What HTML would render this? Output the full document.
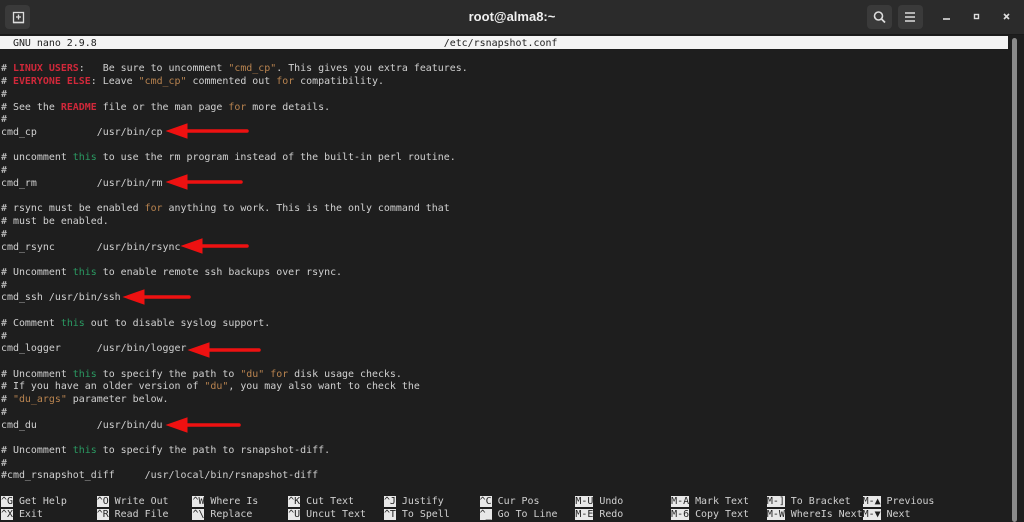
<!DOCTYPE html>
<html><head><meta charset="utf-8"><style>
*{margin:0;padding:0;box-sizing:border-box}
html,body{width:1024px;height:522px;overflow:hidden}
body{background:#1e1e1e;position:relative;font-family:"DejaVu Sans Mono","Liberation Mono",monospace;}
#tb{position:absolute;left:0;top:0;width:1024px;height:35px;background:#2b2b2b;border-bottom:1px solid #1a1a1a}
#tb .t{position:absolute;left:0;right:0;top:9px;text-align:center;color:#f0f0f0;font:bold 13px "Liberation Sans",sans-serif}
.btn{position:absolute;top:5px;width:25px;height:24px;background:#3a3a3a;border-radius:4px}
#term{position:absolute;left:1px;top:38px;font-size:9.95px;line-height:12.72px;color:#d0d0d0;white-space:pre}
.r{color:#d0283a;font-weight:bold}.o{color:#b8834f}.g{color:#2a9a62}
.k{background:#e8e8e8;color:#1e1e1e}
#hdr{position:absolute;left:0;top:36px;width:1008px;height:13px;background:#f4f4f4}
#sb{position:absolute;left:1012px;top:38px;width:5px;height:484px;background:#8a8a8a;border-radius:3px}
svg{position:absolute;left:0;top:0}
</style></head><body>
<div id="tb">
<div class="btn" style="left:5px"></div>
<svg width="40" height="35"><rect x="13.5" y="12.5" width="10" height="10" fill="none" stroke="#ddd" stroke-width="1.3"/><path d="M18.5 14.5v5M16 17h5" stroke="#ddd" stroke-width="1.3"/><path d="M13 22.5h11" stroke="#ddd" stroke-width="1.5"/></svg>
<div class="t">root@alma8:~</div>
<div class="btn" style="left:867px"></div>
<div class="btn" style="left:898px"></div>
<svg width="1024" height="35"><circle cx="878.5" cy="16" r="4" fill="none" stroke="#ddd" stroke-width="1.6"/><path d="M881.5 19l3.5 3.5" stroke="#ddd" stroke-width="1.8"/><path d="M905 13h10M905 17h10M905 21h10" stroke="#ddd" stroke-width="1.4"/><path d="M943 19h7" stroke="#ddd" stroke-width="1.6"/><rect x="974.5" y="14.5" width="4" height="4" fill="none" stroke="#ddd" stroke-width="1.4"/><path d="M1004 14l5 5M1009 14l-5 5" stroke="#ddd" stroke-width="1.6"/></svg>
</div>
<div id="hdr"></div>
<div id="sb"></div>
<div id="term"><span style="color:#222">  GNU nano 2.9.8                                                          /etc/rsnapshot.conf</span>

# <span class="r">LINUX USERS</span>:   Be sure to uncomment <span class="o">"cmd_cp"</span>. This gives you extra features.
# <span class="r">EVERYONE ELSE</span>: Leave <span class="o">"cmd_cp"</span> commented out <span class="o">for</span> compatibility.
#
# See the <span class="r">README</span> file or the man page <span class="o">for</span> more details.
#
cmd_cp          /usr/bin/cp

# uncomment <span class="g">this</span> to use the rm program instead of the built-in perl routine.
#
cmd_rm          /usr/bin/rm

# rsync must be enabled <span class="o">for</span> anything to work. This is the only command that
# must be enabled.
#
cmd_rsync       /usr/bin/rsync

# Uncomment <span class="g">this</span> to enable remote ssh backups over rsync.
#
cmd_ssh /usr/bin/ssh

# Comment <span class="g">this</span> out to disable syslog support.
#
cmd_logger      /usr/bin/logger

# Uncomment <span class="g">this</span> to specify the path to <span class="o">"du"</span> <span class="o">for</span> disk usage checks.
# If you have an older version of <span class="o">"du"</span>, you may also want to check the
# <span class="o">"du_args"</span> parameter below.
#
cmd_du          /usr/bin/du

# Uncomment <span class="g">this</span> to specify the path to rsnapshot-diff.
#
#cmd_rsnapshot_diff     /usr/local/bin/rsnapshot-diff

<span class="k">^G</span> Get Help     <span class="k">^O</span> Write Out    <span class="k">^W</span> Where Is     <span class="k">^K</span> Cut Text     <span class="k">^J</span> Justify      <span class="k">^C</span> Cur Pos      <span class="k">M-U</span> Undo        <span class="k">M-A</span> Mark Text   <span class="k">M-]</span> To Bracket  <span class="k">M-▲</span> Previous
<span class="k">^X</span> Exit         <span class="k">^R</span> Read File    <span class="k">^\</span> Replace      <span class="k">^U</span> Uncut Text   <span class="k">^T</span> To Spell     <span class="k">^_</span> Go To Line   <span class="k">M-E</span> Redo        <span class="k">M-6</span> Copy Text   <span class="k">M-W</span> WhereIs Next<span class="k">M-▼</span> Next</div>
<svg width="1024" height="522">
<g fill="#ee1111" stroke="#ee1111" stroke-width="3.5" stroke-linecap="round">
<path d="M185 131H247"/><path d="M167 131l20-7v14z" stroke-width="1"/>
<path d="M185 182H241"/><path d="M167 182l20-7v14z" stroke-width="1"/>
<path d="M200 246H247"/><path d="M182 246l20-7v14z" stroke-width="1"/>
<path d="M142 297H189"/><path d="M124 297l20-7v14z" stroke-width="1"/>
<path d="M207 350H259"/><path d="M189 350l20-7v14z" stroke-width="1"/>
<path d="M185 425H239"/><path d="M167 425l20-7v14z" stroke-width="1"/>
</g></svg>
</body></html>
